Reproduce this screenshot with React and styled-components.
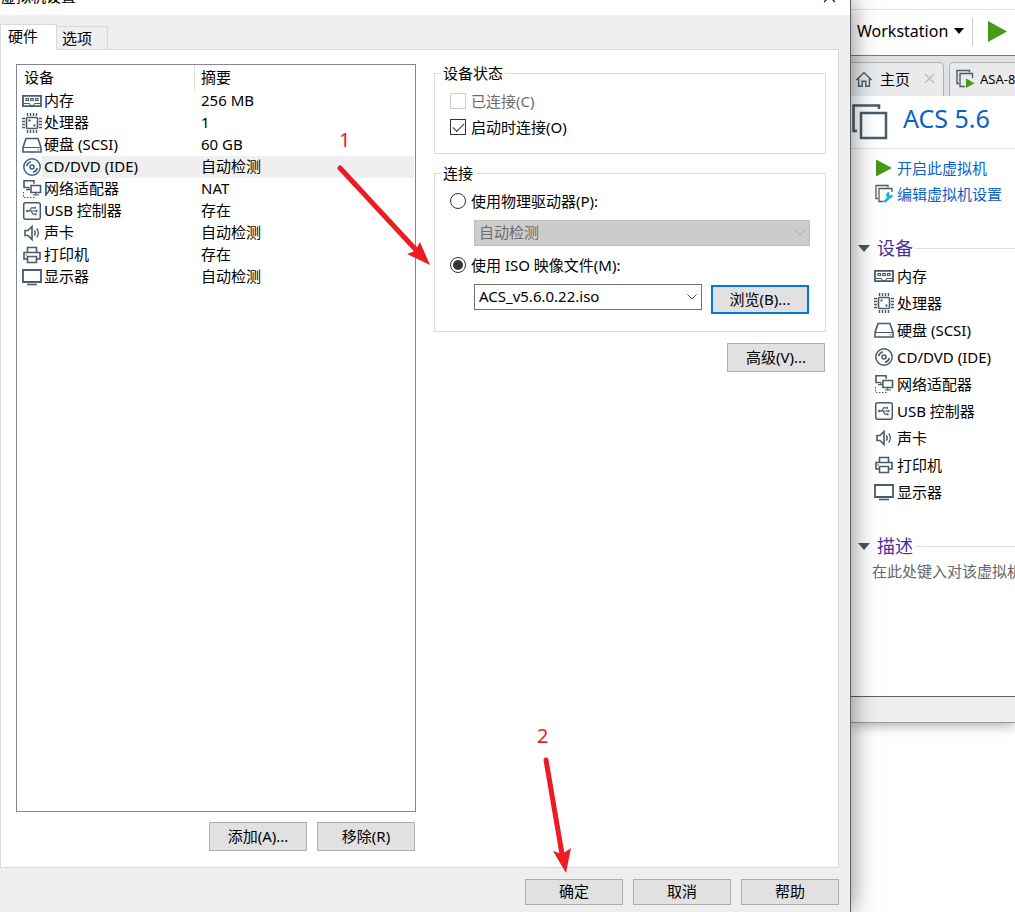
import React from 'react';
import styled, { createGlobalStyle, css } from 'styled-components';

const Global = createGlobalStyle`
  *, *::before, *::after { box-sizing: border-box; }
  body { margin: 0; background: #fff; }
  body, button, select, input {
    font-family: "Noto Sans", "Noto Sans CJK SC", sans-serif;
    font-size: 15px;
    line-height: 20px;
    color: #000;
  }
`;

const Desktop = styled.div`
  position: relative;
  display: flex;
  min-height: 100vh;
  overflow: hidden;
`;

/* ---------- settings dialog ---------- */

const Dialog = styled.section`
  position: relative;
  z-index: 1;
  flex: 1;
  min-width: 0;
  display: flex;
  flex-direction: column;
  background: #efefef;
  border-right: 1px solid #606060;
  box-shadow: 0 0 24px rgba(0, 0, 0, 0.5);
`;

const TitleBar = styled.header`
  display: flex;
  justify-content: space-between;
  align-items: flex-end;
  height: 15px;
  padding: 0 14px 9px 1px;
  background: #fff;
`;

const DialogTitle = styled.h1`
  margin: 0;
  font-size: 15px;
  font-weight: 400;
`;

const CloseButton = styled.button`
  display: flex;
  align-items: flex-start;
  height: 20px;
  padding: 4px 0 0;
  border: 0;
  background: none;
`;

const TabBar = styled.nav`
  display: flex;
  align-items: flex-end;
  padding-top: 9px;
`;

const Tab = styled.button`
  position: relative;
  z-index: 1;
  height: ${(p) => (p.$active ? 26 : 23)}px;
  margin-bottom: ${(p) => (p.$active ? -1 : 0)}px;
  padding: ${(p) => (p.$active ? '0 18px 4px 7px' : '0 15px 0 5px')};
  border: 1px solid #d9d9d9;
  border-bottom: 0;
  border-left-width: ${(p) => (p.$active ? 1 : 0)}px;
  background: ${(p) => (p.$active ? '#fff' : '#efefef')};
`;

const Panel = styled.div`
  flex: 1;
  display: flex;
  gap: 18px;
  margin-right: 11px;
  padding: 14px 12px 15px 15px;
  border: 1px solid #d9d9d9;
  background: #fff;
`;

const DeviceColumn = styled.div`
  flex: 0 0 400px;
  display: flex;
  flex-direction: column;
  gap: 9px;
`;

const DeviceList = styled.div`
  flex: 1;
  border: 1px solid #828790;
  padding-right: 1px;
`;

const DeviceTable = styled.table`
  width: 100%;
  table-layout: fixed;
  border-collapse: collapse;
  text-align: left;
`;

const IconCol = styled.col`
  width: 25px;
`;

const NameCol = styled.col`
  width: 152px;
`;

const HeadCell = styled.th`
  height: 25px;
  padding: 0 0 2px 7px;
  font-weight: 400;
`;

const SummaryHead = styled(HeadCell)`
  box-shadow: inset 1px 0 #e0e0e0;
`;

const Cell = styled.td`
  height: 22px;
  padding: 0 0 2px ${(p) => p.$indent}px;
  background: ${(p) => (p.$selected ? '#efefef' : 'transparent')};
`;

const IconCell = styled.td`
  height: 22px;
  padding: 0 0 0 5px;
`;

const ButtonRow = styled.div`
  display: flex;
  justify-content: flex-end;
  gap: 10px;
`;

const PushButton = styled.button`
  width: 98px;
  height: ${(p) => (p.$short ? 26 : 29)}px;
  padding: 0 0 2px;
  border: 1px solid #adadad;
  background: #e1e1e1;
  ${(p) =>
    p.$focused &&
    css`
      border: 2px solid #0078d7;
    `}
`;

const PanelButtons = styled(ButtonRow)`
  padding: 1px;
`;

const OptionColumn = styled.div`
  flex: 1;
  min-width: 0;
  margin-top: -1px;
`;

const Group = styled.fieldset`
  min-width: 0;
  margin: 0 0 9px;
  padding: 8px 15px ${(p) => p.$bottom}px 6px;
  border: 1px solid #dcdcdc;
`;

const Legend = styled.legend`
  padding: 0 2px;
`;

const Fields = styled.div`
  display: flex;
  flex-direction: column;
  gap: ${(p) => p.$gap}px;
  padding-left: 9px;
`;

const Option = styled.label`
  display: flex;
  align-items: center;
  gap: 5px;
  color: ${(p) => (p.$disabled ? '#6d6d6d' : '#000')};
`;

const CheckBox = styled.input`
  appearance: none;
  display: grid;
  place-items: center;
  width: 16px;
  height: 16px;
  margin: 0;
  border: 1px solid #333;
  background: #fff;
  &:disabled { border-color: #ccc; }
  &:checked::before {
    content: '';
    width: 11px;
    height: 6px;
    margin-bottom: 3px;
    border: solid #333;
    border-width: 0 0 1px 1px;
    transform: rotate(-45deg);
  }
`;

const Radio = styled(CheckBox)`
  border-radius: 50%;
  &:checked::before {
    width: 10px;
    height: 10px;
    margin: 0;
    border: 0;
    border-radius: 50%;
    background: #333;
    transform: none;
  }
`;

const FileRow = styled.div`
  display: flex;
  gap: 9px;
  padding: 0 1px 0 24px;
`;

const SelectWrap = styled.div`
  position: relative;
  min-width: 0;
  height: 26px;
  margin-left: ${(p) => (p.$inset ? 24 : 0)}px;
  flex: ${(p) => (p.$inset ? 'none' : 1)};
`;

const Select = styled.select`
  appearance: none;
  display: block;
  width: 100%;
  height: 26px;
  padding: 0 24px 2px 4px;
  border: 1px solid #707070;
  border-radius: 0;
  background: #fff;
  &:disabled {
    border-color: #bfbfbf;
    background: #ccc;
    color: #6d6d6d;
    opacity: 1;
  }
`;

const Chevron = styled.svg`
  position: absolute;
  right: 5px;
  top: 10px;
  pointer-events: none;
  stroke: ${(p) => (p.$dim ? '#a0a0a0' : '#444')};
`;

const BrowseSlot = styled.div`
  padding-top: 1px;
`;

const AdvancedRow = styled(ButtonRow)`
  padding: 2px 1px 0;
`;

const Footer = styled(ButtonRow)`
  padding: 11px 11px 7px;
`;

/* ---------- workstation window ---------- */

const WorkstationSlot = styled.div`
  display: flex;
  flex: 0 0 164px;
  min-width: 0;
`;

const Workstation = styled.section`
  flex: 0 0 164px;
  display: flex;
  flex-direction: column;
  min-width: 0;
  margin-bottom: 189px;
  overflow: hidden;
  white-space: nowrap;
  border-bottom: 1px solid #9a9a9a;
  box-shadow: 0 2px 12px rgba(0, 0, 0, 0.35);
`;

const Toolbar = styled.div`
  display: flex;
  align-items: center;
  height: 47px;
  margin-top: 9px;
  padding: 0 0 2px 6px;
  border-top: 1px solid #e2e2e2;
  border-bottom: 1px solid #77797c;
`;

const MenuButton = styled.button`
  display: flex;
  align-items: center;
  gap: 6px;
  padding: 0 0 2px;
  border: 0;
  background: none;
  font-size: 16px;
`;

const ToolDivider = styled.div`
  width: 1px;
  height: 28px;
  margin: 0 15px 0 8px;
  background: #c8c8c8;
`;

const ToolButton = styled.button`
  display: flex;
  padding: 0;
  border: 0;
  background: none;
`;

const DocTabs = styled.div`
  display: flex;
  gap: 5px;
  height: 40px;
  padding-top: 6px;
  background: #e1e2e4;
`;

const DocTab = styled.div`
  display: flex;
  flex: none;
  align-items: center;
  gap: ${(p) => (p.$home ? 7 : 5)}px;
  width: ${(p) => (p.$home ? 93 : 120)}px;
  padding: 0 0 2px ${(p) => (p.$home ? 4 : 5)}px;
  border: 1px solid #aeb0b3;
  border-bottom: 0;
  border-left-width: ${(p) => (p.$home ? 0 : 1)}px;
  border-radius: ${(p) => (p.$home ? '0 5px 0 0' : '5px 5px 0 0')};
  background: #e9eaec;
  font-size: ${(p) => (p.$home ? 15 : 13)}px;
`;

const TabClose = styled.button`
  display: flex;
  margin-left: 7px;
  padding: 0;
  border: 0;
  background: none;
`;

const MachineHeader = styled.div`
  display: flex;
  align-items: center;
  gap: 15px;
  height: 53px;
  padding-left: 1px;
  border-bottom: 1px solid #e0e0e0;
`;

const MachineName = styled.h2`
  margin: 0;
  padding-bottom: 8px;
  font-size: 25px;
  line-height: 32px;
  font-weight: 400;
  color: #0a62c9;
`;

const Actions = styled.div`
  display: flex;
  flex-direction: column;
  gap: 6px;
  padding: 9px 0 0 23px;
`;

const ActionLink = styled.a`
  display: flex;
  align-items: center;
  gap: 3px;
  color: #0a62c9;
  text-decoration: none;
`;

const SectionTitle = styled.h3`
  display: flex;
  align-items: center;
  gap: 7px;
  margin: 0;
  padding-left: 7px;
  font-size: 18px;
  line-height: 24px;
  font-weight: 400;
  color: #4a2f9c;
  &::after {
    content: '';
    flex: 1;
    height: 1px;
    margin-left: -4px;
    background: #dcdcdc;
  }
`;

const DeviceSection = styled.section`
  padding-top: 32px;
`;

const DeviceItems = styled.ul`
  margin: 0;
  padding: 2px 0 0 23px;
  list-style: none;
`;

const DeviceItem = styled.li`
  display: flex;
  align-items: center;
  gap: 3px;
  height: 27px;
`;

const DescriptionSection = styled.section`
  flex: 1;
  padding-top: 29px;
`;

const Placeholder = styled.p`
  margin: 0;
  padding: 3px 0 0 21px;
  color: #666;
`;

const StatusBar = styled.footer`
  height: 26px;
  border-top: 1px solid #606060;
  background: #efefef;
`;

/* ---------- markers above the windows ---------- */

const Marker = styled.div`
  position: absolute;
  z-index: 2;
  left: ${(p) => p.$x}px;
  top: ${(p) => p.$y}px;
  font-size: 20px;
  line-height: 24px;
  color: #ed1c24;
  pointer-events: none;
  & > svg { display: block; }
`;

/* ---------- drawings ---------- */

const Glyph = styled.svg`
  display: block;
  flex: none;
  fill: none;
  stroke: ${(p) => p.$color || '#4a5b69'};
`;

const shapes = {
  memory: (
    <>
      <path d="M0 15.500V4.500h20v11" strokeWidth="0" />
      <path d="M1 4.800h18v10.400H1z" strokeWidth="1.800" />
      <path d="M4 7.500h2.500v2H4zM8.700 7.500h2.500v2H8.700zM13.500 7.500H16v2h-2.500z" strokeWidth="1.200" />
      <path d="M2 12.500h5.500l1 2h3l1-2H18" />
    </>
  ),
  cpu: (
    <>
      <rect x="4.500" y="4.500" width="11" height="11" rx="1" strokeWidth="1.600" />
      <path
        d="M5.500 0v3M8.500 0v3M11.500 0v3M14.500 0v3M5.500 17v3M8.500 17v3M11.500 17v3M14.500 17v3M0 5.500h3M0 8.500h3M0 11.500h3M0 14.500h3M17 5.500h3M17 8.500h3M17 11.500h3M17 14.500h3"
        strokeWidth="1.400"
      />
      <path d="M6.500 7.500h2M11.500 12.500h2" strokeWidth="1.800" />
    </>
  ),
  disk: (
    <>
      <path d="M4 3.500h12l3 9v4.500H1v-4.500z" strokeWidth="1.600" />
      <path d="M1.500 12.500h17M15.500 14.800h1.500" />
    </>
  ),
  cd: (
    <>
      <circle cx="10" cy="10" r="8.200" strokeWidth="1.500" />
      <circle cx="10" cy="10" r="2" strokeWidth="1.500" />
      <path d="M4.700 9c.5-2.200 2-3.800 4.300-4.300M15.300 11c-.5 2.200-2 3.800-4.300 4.300" strokeWidth="1.600" />
    </>
  ),
  network: (
    <>
      <path d="M7 8.500H2v-6.700h10v3" strokeWidth="1.600" />
      <path d="M9 6.500h9.500v7H9z" strokeWidth="1.600" />
      <path d="M13.700 13.500v2M11 16h6M7 8.500v2M4 10.700h4" strokeWidth="1.200" />
      <path d="M1.500 13v5.500h11" strokeDasharray="1.500 1.500" />
    </>
  ),
  usb: (
    <>
      <rect x="1.700" y="1.700" width="16.600" height="16.600" rx="2" strokeWidth="1.500" />
      <path d="M5 10h9M7.500 10l2-3.200h3M9 10l2 3.200h2.500" strokeWidth="1.200" />
      <path d="M4 10l2-1v2zM15.500 10l-1.500-1v2z" />
      <path d="M12.500 6.800h1.500M13 13.200h1.500" strokeWidth="2" />
    </>
  ),
  sound: (
    <>
      <path d="M3 7.500h3l4-4v13l-4-4H3z" strokeWidth="1.600" />
      <path d="M12.300 7.300c1.200 1.600 1.200 3.800 0 5.400M14.700 5.500c2 2.600 2 6.400 0 9" strokeWidth="1.300" />
    </>
  ),
  printer: (
    <>
      <path d="M5.500 7V2.500h9V7M5 14H2V7.500h16V14h-3" strokeWidth="1.600" />
      <path d="M5.500 11.500h9v6h-9z" strokeWidth="1.600" />
      <path d="M3.500 9.800h1.500" />
    </>
  ),
  display: (
    <>
      <path d="M1 3h18v12H1z" strokeWidth="1.800" />
      <path d="M5 17.500h10" strokeWidth="1.600" />
    </>
  ),
  edit: (
    <>
      <path d="M4 14.500H2V1.500h12v2" strokeWidth="1.300" />
      <path d="M9.500 17.500H5v-13h13V8" strokeWidth="1.300" />
      <path d="M10.500 18l5-5" stroke="#19b5d6" strokeWidth="2.800" />
      <path d="M18.500 10.500a3.200 3.200 0 1 1-3-2.500l-.5 2.500 1.500 1z" fill="#19b5d6" stroke="none" />
    </>
  ),
  running: (
    <>
      <path d="M4 14.500H2V1.500h12.500v2" strokeWidth="1.400" />
      <path d="M10 17.500H5V4.500h12.500V9" strokeWidth="1.400" />
      <path d="M11 9.500v9.500l8.500-4.700z" fill="#469a15" stroke="none" />
    </>
  ),
  home: (
    <path d="M1.500 11L10 3l8.500 8M4 9v9h4v-5.500h4V18h4V9" strokeWidth="1.600" />
  ),
};

const Icon = ({ name, color }) => (
  <Glyph width="20" height="20" viewBox="0 0 20 20" $color={color} aria-hidden="true">
    {shapes[name]}
  </Glyph>
);

const Play = ({ width, height }) => (
  <svg width={width} height={height} viewBox="0 0 20 20" preserveAspectRatio="none" aria-hidden="true">
    <path d="M0 0L20 10L0 20z" fill="#469a15" />
  </svg>
);

const Cross = ({ size, color, width }) => (
  <svg width={size} height={size} viewBox="0 0 12 12" aria-hidden="true">
    <path d="M1 1l10 10M11 1L1 11" stroke={color} strokeWidth={width} />
  </svg>
);

const Triangle = ({ color }) => (
  <svg width="12" height="7" viewBox="0 0 12 7" aria-hidden="true">
    <path d="M0 0h12L6 7z" fill={color} />
  </svg>
);

const Arrow = ({ disabled }) => (
  <Chevron width="10" height="6" viewBox="0 0 10 6" fill="none" $dim={disabled} aria-hidden="true">
    <path d="M0.500 0.500L5 5L9.500 0.500" />
  </Chevron>
);

const devices = [
  ['memory', '内存', '256 MB'],
  ['cpu', '处理器', '1'],
  ['disk', '硬盘 (SCSI)', '60 GB'],
  ['cd', 'CD/DVD (IDE)', '自动检测'],
  ['network', '网络适配器', 'NAT'],
  ['usb', 'USB 控制器', '存在'],
  ['sound', '声卡', '自动检测'],
  ['printer', '打印机', '存在'],
  ['display', '显示器', '自动检测'],
];

const SettingsDialog = () => (
  <Dialog aria-label="虚拟机设置">
    <TitleBar>
      <DialogTitle>虚拟机设置</DialogTitle>
      <CloseButton type="button" aria-label="关闭">
        <Cross size={13} color="#222" width={1.2} />
      </CloseButton>
    </TitleBar>
    <TabBar>
      <Tab type="button" $active>硬件</Tab>
      <Tab type="button">选项</Tab>
    </TabBar>
    <Panel>
      <DeviceColumn>
        <DeviceList>
          <DeviceTable>
            <colgroup>
              <IconCol />
              <NameCol />
              <col />
            </colgroup>
            <thead>
              <tr>
                <HeadCell colSpan={2}>设备</HeadCell>
                <SummaryHead>摘要</SummaryHead>
              </tr>
            </thead>
            <tbody>
              {devices.map(([icon, name, summary]) => {
                const selected = icon === 'cd';
                return (
                  <tr key={icon}>
                    <IconCell>
                      <Icon name={icon} color={selected ? '#3a6488' : undefined} />
                    </IconCell>
                    <Cell $indent={2} $selected={selected}>{name}</Cell>
                    <Cell $indent={7} $selected={selected}>{summary}</Cell>
                  </tr>
                );
              })}
            </tbody>
          </DeviceTable>
        </DeviceList>
        <PanelButtons>
          <PushButton type="button">添加(A)...</PushButton>
          <PushButton type="button">移除(R)</PushButton>
        </PanelButtons>
      </DeviceColumn>
      <OptionColumn>
        <Group $bottom={16}>
          <Legend>设备状态</Legend>
          <Fields $gap={6}>
            <Option $disabled>
              <CheckBox type="checkbox" disabled />
              已连接(C)
            </Option>
            <Option>
              <CheckBox type="checkbox" defaultChecked />
              启动时连接(O)
            </Option>
          </Fields>
        </Group>
        <Group $bottom={17}>
          <Legend>连接</Legend>
          <Fields $gap={9}>
            <Option>
              <Radio type="radio" name="source" />
              使用物理驱动器(P):
            </Option>
            <SelectWrap $inset>
              <Select disabled aria-label="物理驱动器">
                <option>自动检测</option>
              </Select>
              <Arrow disabled />
            </SelectWrap>
            <Option>
              <Radio type="radio" name="source" defaultChecked />
              使用 ISO 映像文件(M):
            </Option>
            <FileRow>
              <SelectWrap>
                <Select aria-label="ISO 映像文件">
                  <option>ACS_v5.6.0.22.iso</option>
                </Select>
                <Arrow />
              </SelectWrap>
              <BrowseSlot>
                <PushButton type="button" $focused>浏览(B)...</PushButton>
              </BrowseSlot>
            </FileRow>
          </Fields>
        </Group>
        <AdvancedRow>
          <PushButton type="button">高级(V)...</PushButton>
        </AdvancedRow>
      </OptionColumn>
    </Panel>
    <Footer>
      <PushButton type="button" $short>确定</PushButton>
      <PushButton type="button" $short>取消</PushButton>
      <PushButton type="button" $short>帮助</PushButton>
    </Footer>
  </Dialog>
);

const WorkstationWindow = () => (
  <WorkstationSlot>
    <Workstation>
      <Toolbar>
        <MenuButton type="button">
          Workstation
          <svg width="10" height="6" viewBox="0 0 10 6" aria-hidden="true">
            <path d="M0 0h10L5 6z" fill="#000" />
          </svg>
        </MenuButton>
        <ToolDivider />
        <ToolButton type="button" aria-label="开启">
          <Play width="19" height="21" />
        </ToolButton>
      </Toolbar>
      <DocTabs>
        <DocTab $home>
          <Glyph width="18" height="18" viewBox="0 0 20 20" aria-hidden="true">{shapes.home}</Glyph>
          主页
          <TabClose type="button" aria-label="关闭主页">
            <Cross size={11} color="#bfbfbf" width={1.6} />
          </TabClose>
        </DocTab>
        <DocTab>
          <Icon name="running" />
          ASA-8.4
        </DocTab>
      </DocTabs>
      <MachineHeader>
        <Glyph width="36" height="36" viewBox="0 0 36 36" aria-hidden="true">
          <path d="M27 5V1.500H1.500V27H5" strokeWidth="2.500" />
          <path d="M9 9h25v25H9z" strokeWidth="2.500" />
        </Glyph>
        <MachineName>ACS 5.6</MachineName>
      </MachineHeader>
      <Actions>
        <ActionLink href="#start">
          <Glyph width="20" height="20" viewBox="0 0 20 20" aria-hidden="true">
            <path d="M2 1.500L18 10L2 18.500z" fill="#469a15" stroke="none" />
          </Glyph>
          开启此虚拟机
        </ActionLink>
        <ActionLink href="#edit">
          <Icon name="edit" />
          编辑虚拟机设置
        </ActionLink>
      </Actions>
      <DeviceSection>
        <SectionTitle>
          <Triangle color="#44596a" />
          设备
        </SectionTitle>
        <DeviceItems>
          {devices.map(([icon, name]) => (
            <DeviceItem key={icon}>
              <Icon name={icon} />
              {name}
            </DeviceItem>
          ))}
        </DeviceItems>
      </DeviceSection>
      <DescriptionSection>
        <SectionTitle>
          <Triangle color="#44596a" />
          描述
        </SectionTitle>
        <Placeholder>在此处键入对该虚拟机的描述。</Placeholder>
      </DescriptionSection>
      <StatusBar />
    </Workstation>
  </WorkstationSlot>
);

export default function App() {
  return (
    <Desktop>
      <Global />
      <SettingsDialog />
      <WorkstationWindow />
      <Marker $x={339} $y={128}>1</Marker>
      <Marker $x={336} $y={164}>
        <svg width="96" height="104" viewBox="0 0 96 104" aria-hidden="true">
          <path d="M4 4L81 87" stroke="#ed1c24" strokeWidth="5" strokeLinecap="round" />
          <path d="M94 101L71 90L79 87L84 78z" fill="#ed1c24" />
        </svg>
      </Marker>
      <Marker $x={537} $y={724}>2</Marker>
      <Marker $x={542} $y={756}>
        <svg width="32" height="118" viewBox="0 0 32 118" aria-hidden="true">
          <path d="M4 4L20 98" stroke="#ed1c24" strokeWidth="5" strokeLinecap="round" />
          <path d="M24 117L11 95L20 98L29 92z" fill="#ed1c24" />
        </svg>
      </Marker>
    </Desktop>
  );
}
